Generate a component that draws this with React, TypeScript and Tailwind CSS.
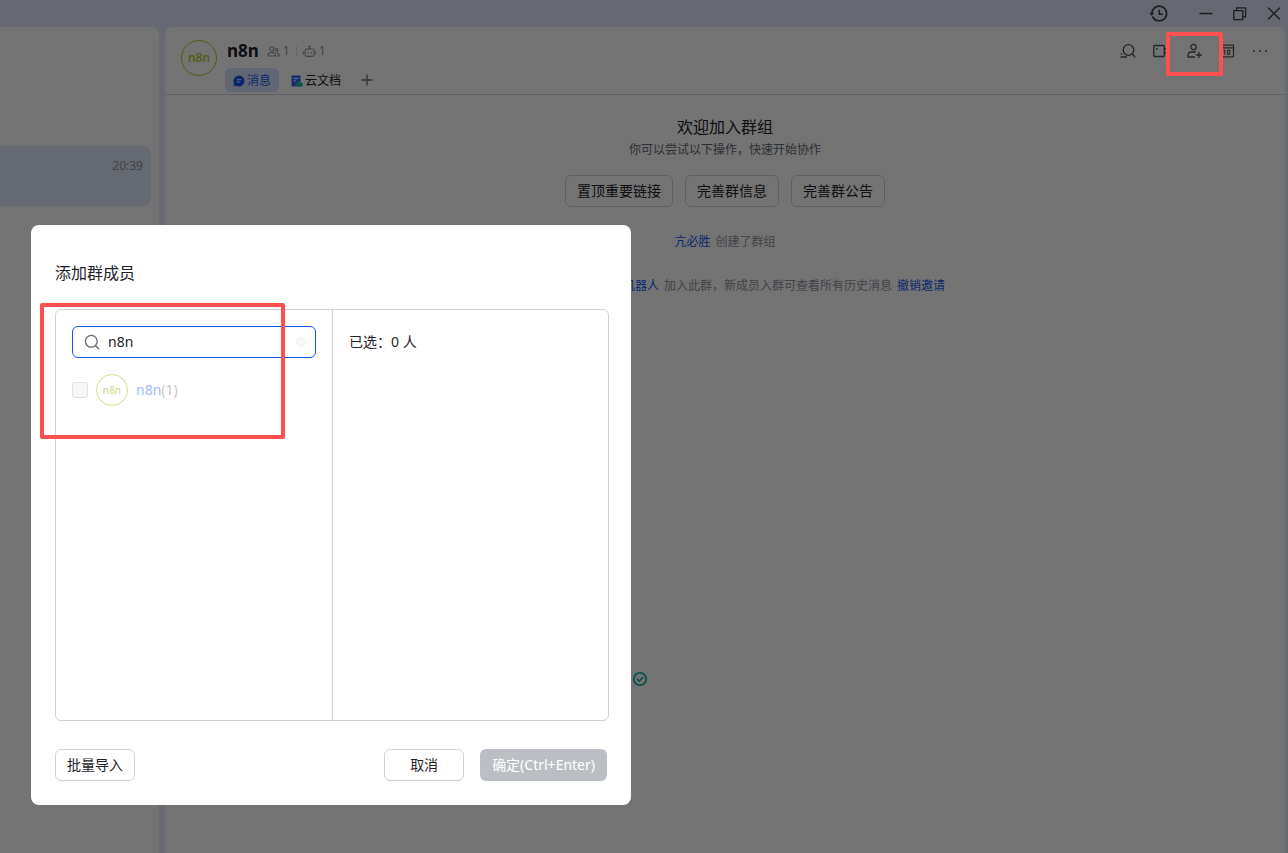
import { useState } from 'react';
import type { ReactNode } from 'react';
import { clsx } from 'clsx';

function Icon({ size = 16, className, children }: { size?: number; className?: string; children: ReactNode }) {
  return (
    <svg
      width={size}
      height={size}
      viewBox="0 0 16 16"
      fill="none"
      stroke="currentColor"
      strokeWidth="1.3"
      strokeLinecap="round"
      strokeLinejoin="round"
      className={clsx('shrink-0', className)}
      aria-hidden="true"
    >
      {children}
    </svg>
  );
}

function GroupAvatar({ className }: { className?: string }) {
  return (
    <span
      className={clsx(
        'flex shrink-0 items-center justify-center rounded-full border bg-white font-medium',
        className
      )}
    >
      n8n
    </span>
  );
}

/* TITLE BAR */
function TitleBar() {
  return (
    <header className="flex h-[27px] shrink-0 items-center justify-end pr-[6px] text-[#3c4047]">
      <button type="button" aria-label="历史记录" className="mr-[29px]">
        <Icon size={20}>
          <path d="M3 10.4A5.9 5.9 0 1 0 2.3 7.2" />
          <path d="M.9 7.3h2.8L2.3 9z" fill="currentColor" strokeWidth=".6" />
          <path d="M8.2 5v3.2h2.5" />
        </Icon>
      </button>
      <button type="button" aria-label="最小化" className="mr-[18px]">
        <Icon>
          <path d="M2 7.5h12" strokeWidth="1.4" />
        </Icon>
      </button>
      <button type="button" aria-label="还原" className="mr-[18px]">
        <Icon>
          <path d="M1.8 4.6h9v9h-9z" />
          <path d="M4.6 4.6V1.800h9v9h-2.800" />
        </Icon>
      </button>
      <button type="button" aria-label="关闭">
        <Icon>
          <path d="m2.5 2 11 11M13.5 2l-11 11" />
        </Icon>
      </button>
    </header>
  );
}

/* CONVERSATION LIST */
function Sidebar() {
  return (
    <aside className="w-[159px] shrink-0 rounded-tr-lg bg-white pt-[119px] pr-2">
      <a
        href="#chat"
        className="flex h-[60px] justify-end rounded-r-lg bg-[#e0e9fb] px-2 pt-3 text-xs leading-4 text-[#8f959e]"
      >
        20:39
      </a>
    </aside>
  );
}

/* CHAT HEADER */
function ChatHeader() {
  return (
    <div className="flex h-[68px] shrink-0 items-start border-b border-[#d0d3d6] px-4">
      <GroupAvatar className="mt-[13px] h-9 w-9 border-[#a8cb22] text-xs text-[#a8cb22]" />
      <div className="ml-2 flex-1 pt-3">
        <div className="flex h-6 items-center pl-[2px] text-xs text-[#8f959e]">
          <h1 className="text-[17px] font-bold text-[#1f2329]">n8n</h1>
          <Icon size={13} className="ml-2">
            <circle cx="5.8" cy="4.8" r="2.6" />
            <path d="M1 13.5c0-3 2-4.3 4.8-4.3s4.8 1.3 4.8 4.3z" />
            <circle cx="11.8" cy="6" r="1.7" />
            <path d="M12 9.8c2 0 3 1.2 3 3.7h-1.8" />
          </Icon>
          <span className="ml-[3px]">1</span>
          <span className="mx-[6px] h-[10px] w-px bg-[#dee0e3]" />
          <Icon size={13}>
            <rect x="2.5" y="5" width="11" height="9" rx="2" />
            <path d="M8 5V2M6.5 1.8h3M.8 8v3M15.2 8v3M6 9v1M10 9v1" />
          </Icon>
          <span className="ml-[3px]">1</span>
        </div>
        <nav className="mt-[5px] flex h-6 items-center text-xs leading-6 text-[#1f2329]">
          <a href="#messages" className="flex h-6 items-center gap-[2px] rounded-md bg-[#d9e3fc] px-2 pt-px text-[#1456f0]">
            <svg width="12" height="12" viewBox="0 0 12 12" aria-hidden="true">
              <path d="M6 .5A5.5 5.5 0 1 1 2.8 10.5L.5 11.5l.6-3A5.5 5.5 0 0 1 6 .5z" fill="#1456f0" />
              <path d="M3.8 4.7h4.5M3.8 7h3" stroke="#e8efff" strokeWidth="1.1" />
            </svg>
            消息
          </a>
          <a href="#docs" className="ml-3 flex items-center gap-[2px] pt-px">
            <svg width="12" height="12" viewBox="0 0 12 12" aria-hidden="true">
              <path d="M.5.5h9v11h-9z" fill="#2e66f5" />
              <path d="M2.500 3.500h5M2.500 6h2.500" stroke="#fff" />
              <path d="M6 11.500a2 2 0 0 1 .1-3.900 2.300 2.300 0 0 1 4.200.3 1.800 1.800 0 0 1 .2 3.600z" fill="#14c0a0" />
            </svg>
            云文档
          </a>
          <button type="button" aria-label="添加标签页" className="ml-[18px] text-[#646a73]">
            <Icon>
              <path d="M8 3v10M3 8h10" />
            </Icon>
          </button>
        </nav>
      </div>
      <div className="flex h-12 items-center gap-[17px] pr-px text-[#51565d]">
        <button type="button" aria-label="搜索消息">
          <Icon>
            <circle cx="8.5" cy="7" r="5.3" />
            <path d="m12.5 11 2.3 3M1 10.8h.8M1 14h5.5" />
          </Icon>
        </button>
        <button type="button" aria-label="视频会议">
          <Icon>
            <rect x=".8" y="2.5" width="10.5" height="11" rx=".8" />
            <path d="M3.800 5.800h.2" strokeWidth="1.800" />
            <path d="m11.300 6.500 3.500-2v7l-3.500-2" />
          </Icon>
        </button>
        <button type="button" aria-label="添加群成员">
          <Icon>
            <circle cx="7.500" cy="4" r="2.700" />
            <path d="M8.500 14H2v-1.500C2 10.500 3.500 9 5.500 9h4M13 9.500v5M10.500 12h5" />
          </Icon>
        </button>
        <button type="button" aria-label="日历">
          <Icon>
            <path d="M1.500 2.200h13v11.600h-13zM1.500 4.800h13" />
            <path d="m5 7.800.8-.5v4M8.500 7.300h2.200v4H8.500z" strokeWidth="1.100" />
          </Icon>
        </button>
        <button type="button" aria-label="更多">
          <Icon>
            <path d="M2 8h.01M8 8h.01M14 8h.01" strokeWidth="2" />
          </Icon>
        </button>
      </div>
    </div>
  );
}

const QUICK_ACTIONS = ['置顶重要链接', '完善群信息', '完善群公告'];

/* CHAT BODY */
function ChatBody() {
  return (
    <div className="flex flex-1 flex-col items-center pt-5 text-xs text-[#8f959e]">
      <h2 className="text-base leading-6 text-[#1f2329]">欢迎加入群组</h2>
      <p className="mt-px leading-5 text-[#646a73]">你可以尝试以下操作，快速开始协作</p>
      <div className="mt-[15px] flex gap-3">
        {QUICK_ACTIONS.map((label) => (
          <button
            key={label}
            type="button"
            className="h-8 rounded-md border border-[#d0d3d6] px-[11px] text-sm text-[#1f2329]"
          >
            {label}
          </button>
        ))}
      </div>
      <p className="mt-[25px] flex gap-[5px] leading-5">
        <a href="#member" className="text-[#1456f0]">亢必胜</a>
        <span>创建了群组</span>
      </p>
      <p className="mt-6 flex gap-[5px] leading-5 whitespace-nowrap">
        <a href="#member" className="text-[#1456f0]">亢必胜</a>
        <span>邀请</span>
        <a href="#bot" className="text-[#1456f0]">自定义群机器人</a>
        <span>加入此群，新成员入群可查看所有历史消息</span>
        <a href="#revoke" className="text-[#1456f0]">撤销邀请</a>
      </p>
      <div className="mt-[375px] w-full pl-[467px] text-[#04b49c]">
        <Icon>
          <circle cx="8" cy="8" r="6.2" strokeWidth="1.6" />
          <path d="m5.3 8.2 2 1.9 3.5-3.7" strokeWidth="1.5" />
        </Icon>
      </div>
    </div>
  );
}

/* ADD MEMBER DIALOG */
function AddMemberDialog() {
  const [query, setQuery] = useState('n8n');

  return (
    <div
      role="dialog"
      aria-labelledby="dialog-title"
      className="w-full max-w-[600px] rounded-lg bg-white px-6 pt-9 pb-6 text-sm text-[#1f2329]"
    >
      <h2 id="dialog-title" className="text-base leading-6">添加群成员</h2>

      <div className="mt-6 -mr-[2px] grid min-h-[412px] grid-cols-[1fr_275px] rounded-md border border-[#d0d3d6]">
        <div className="border-r border-[#d0d3d6] p-4">
          <label className="flex h-8 items-center rounded-md border border-[#1456f0] pr-[9px] pl-[11px]">
            <Icon className="text-[#646a73]">
              <circle cx="7.3" cy="7.3" r="5.9" />
              <path d="m11.7 11.7 3 3" />
            </Icon>
            <input
              type="text"
              aria-label="搜索成员"
              value={query}
              onChange={(e) => setQuery(e.target.value)}
              className="ml-2 w-full min-w-0 outline-none"
            />
            <button type="button" aria-label="清除" onClick={() => setQuery('')}>
              <svg width="10" height="10" viewBox="0 0 10 10" aria-hidden="true">
                <circle cx="5" cy="5" r="5" fill="#f5f6f7" />
                <path d="m3.3 3.3 3.4 3.4M6.7 3.3 3.3 6.7" stroke="#fff" />
              </svg>
            </button>
          </label>
          <label className="mt-4 flex items-center gap-2 text-[#c4c7cc]">
            <input
              type="checkbox"
              disabled
              className="h-4 w-4 appearance-none rounded-[3px] border border-[#dee0e3] bg-[#f5f6f7]"
            />
            <GroupAvatar className="h-8 w-8 border-[#d3e08f] text-[10px] text-[#cfdd9a]" />
            <span>
              <span className="text-[#a1bbf9]">n8n</span>(1)
            </span>
          </label>
        </div>
        <p className="p-4 leading-8">已选：0 人</p>
      </div>

      <div className="mt-7 flex gap-4">
        <button type="button" className="mr-auto h-8 w-20 rounded-md border border-[#d0d3d6]">
          批量导入
        </button>
        <button type="button" className="h-8 w-20 rounded-md border border-[#d0d3d6]">
          取消
        </button>
        <button type="button" disabled className="h-8 rounded-md bg-[#bbbfc4] px-3 text-white">
          确定(Ctrl+Enter)
        </button>
      </div>
    </div>
  );
}

export default function App() {
  return (
    <div className="relative flex min-h-screen flex-col bg-[#e3e9fa] font-['Noto_Sans','Noto_Sans_CJK_SC',sans-serif]">
      <TitleBar />
      <div className="flex flex-1 gap-[6px] pr-[3px]">
        <Sidebar />
        <main className="flex min-w-0 flex-1 flex-col rounded-t-lg bg-white">
          <ChatHeader />
          <ChatBody />
        </main>
      </div>

      {/* OVERLAY */}
      <div className="absolute inset-0 bg-black/55 pt-[225px] pl-[31px]">
        <AddMemberDialog />
      </div>

      {/* HIGHLIGHTS */}
      <div className="pointer-events-none absolute top-[32px] left-[1166px] h-11 w-[57px] rounded-xs border-4 border-[#ff5050]" />
      <div className="pointer-events-none absolute top-[303px] left-[40px] h-[136px] w-[245px] rounded-xs border-4 border-[#ff5050]" />
    </div>
  );
}
